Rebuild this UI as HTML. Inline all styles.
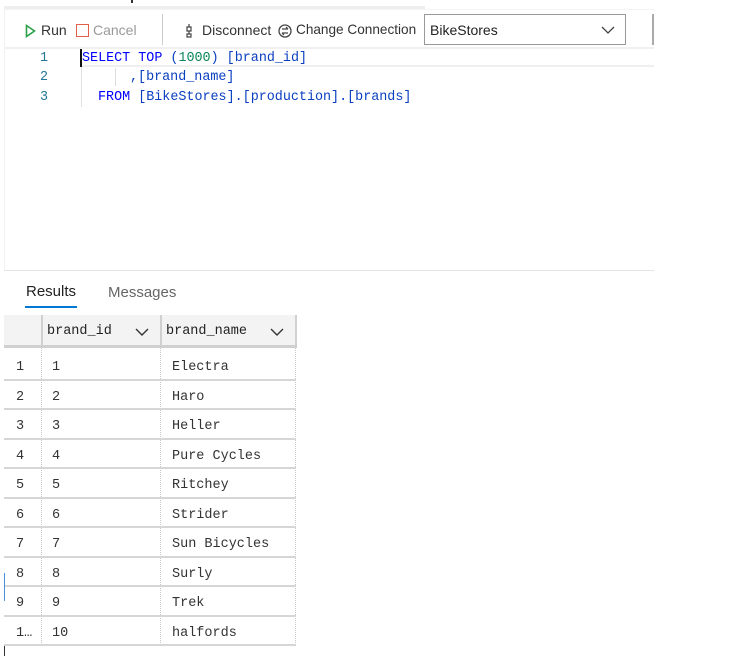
<!DOCTYPE html>
<html><head><meta charset="utf-8"><style>
*{margin:0;padding:0;box-sizing:border-box}
body{width:750px;height:656px;background:#fff;position:relative;overflow:hidden;font-family:"Segoe UI","Liberation Sans",sans-serif;}
.a{position:absolute;white-space:pre}
.mono{font-family:"Liberation Mono","DejaVu Sans Mono",monospace;font-size:13.4px}
.ui{font-size:14px;color:#333}
.kw{color:#0000ff}.num{color:#098658}.id{color:#0a3fc0}
.row{position:absolute;left:4px;width:292px;height:29.5px;border-bottom:2px solid #d6d6d6}
.cell{position:absolute;top:9px;font-family:"Liberation Mono","DejaVu Sans Mono",monospace;font-size:13.5px;color:#333}
</style></head><body>
<div class="a" style="left:4px;top:6px;width:421px;height:3px;background:#eeeeee"></div>
<div class="a" style="left:131px;top:0;width:2px;height:3px;background:#333"></div>
<div class="a" style="left:4px;top:9px;width:650px;height:1px;background:#f4f4f4"></div>
<!-- toolbar -->
<svg class="a" style="left:25px;top:24px" width="11" height="14"><path d="M1.5 1.5 L9.5 7 L1.5 12.5 Z" fill="none" stroke="#2ca049" stroke-width="1.6"/></svg>
<div class="a ui" style="left:41px;top:22px">Run</div>
<div class="a" style="left:76px;top:24px;width:13px;height:13px;border:1.5px solid #e0604a"></div>
<div class="a ui" style="left:93px;top:22px;color:#999">Cancel</div>
<div class="a" style="left:162px;top:14px;width:1px;height:31px;background:#ccc"></div>
<svg class="a" style="left:184px;top:23px" width="10" height="16"><path d="M5 1v3M3 4h4v4H3zM5 8v3M3 11h4v3H3z" fill="none" stroke="#444" stroke-width="1.2"/></svg>
<div class="a ui" style="left:202px;top:22px">Disconnect</div>
<svg class="a" style="left:277px;top:23px" width="16" height="16"><circle cx="8" cy="8" r="6" fill="none" stroke="#444" stroke-width="1.3"/><path d="M5 6h6M11 6l-2-2M11 10H5M5 10l2 2" stroke="#444" stroke-width="1.2" fill="none"/></svg>
<div class="a ui" style="left:296px;top:22px;font-size:13.6px">Change Connection</div>
<div class="a" style="left:424px;top:14px;width:202px;height:31px;border:1.5px solid #999"></div>
<div class="a ui" style="left:430px;top:22px;color:#222">BikeStores</div>
<svg class="a" style="left:601px;top:26px" width="14" height="9"><path d="M1 1l6 6 6-6" fill="none" stroke="#444" stroke-width="1.3"/></svg>
<div class="a" style="left:652px;top:14px;width:1.5px;height:31px;background:#aaa"></div>
<!-- editor -->
<div class="a" style="left:4px;top:47px;width:650px;height:2px;background:#f0f0f0"></div>
<div class="a" style="left:82px;top:65px;width:572px;height:2px;background:#efefef"></div>
<div class="a" style="left:80px;top:49px;width:2px;height:18px;background:#111"></div>
<div class="a" style="left:81px;top:67px;width:1px;height:40px;background:#e0e0e0"></div>
<div class="a" style="left:115px;top:68px;width:1px;height:18px;background:#ddd"></div>
<div class="a mono" style="left:40px;top:51px;color:#237893">1</div>
<div class="a mono" style="left:40px;top:70px;color:#237893">2</div>
<div class="a mono" style="left:40px;top:90px;color:#237893">3</div>
<div class="a mono" style="left:82px;top:51px"><span class="kw">SELECT TOP</span> <span class="id">(</span><span class="num">1000</span><span class="id">) [brand_id]</span></div>
<div class="a mono id" style="left:130px;top:70px">,[brand_name]</div>
<div class="a mono" style="left:98px;top:90px"><span class="kw">FROM</span> <span class="id">[BikeStores].[production].[brands]</span></div>
<!-- results -->
<div class="a" style="left:4px;top:9px;width:1px;height:262px;background:#f2f2f2"></div>
<div class="a" style="left:4px;top:270px;width:650px;height:1px;background:#e4e4e4"></div>
<div class="a" style="left:26px;top:283px;font-size:15px;color:#222">Results</div>
<div class="a" style="left:25px;top:306px;width:52px;height:2px;background:#0078d4"></div>
<div class="a" style="left:108px;top:284px;font-size:15px;color:#666">Messages</div>
<div class="a" style="left:4px;top:315px;width:292px;height:33px;background:#f3f3f3;border-bottom:3px solid #d0d0d0"></div>
<div class="a" style="left:41px;top:315px;width:1.5px;height:33px;background:#d0d0d0"></div>
<div class="a" style="left:160px;top:315px;width:1.5px;height:33px;background:#d0d0d0"></div>
<div class="a" style="left:295px;top:315px;width:1.5px;height:33px;background:#d0d0d0"></div>
<div class="a mono" style="left:47px;top:324px;color:#222;font-size:13.5px">brand_id</div>
<svg class="a" style="left:135px;top:328px" width="14" height="9"><path d="M1 1l6 6 6-6" fill="none" stroke="#333" stroke-width="1.4"/></svg>
<div class="a mono" style="left:166px;top:324px;color:#222;font-size:13.5px">brand_name</div>
<svg class="a" style="left:270px;top:328px" width="14" height="9"><path d="M1 1l6 6 6-6" fill="none" stroke="#333" stroke-width="1.4"/></svg>
<div class="a" style="left:41px;top:348px;width:0;height:297px;border-left:1px dotted #c8c8c8"></div>
<div class="a" style="left:160px;top:348px;width:0;height:297px;border-left:1px dotted #c8c8c8"></div>
<div class="a" style="left:295px;top:348px;width:0;height:297px;border-left:1px dotted #c8c8c8"></div>
<div class="row" style="top:351px"><span class="cell" style="left:12px">1</span><span class="cell" style="left:48px">1</span><span class="cell" style="left:168px">Electra</span></div>
<div class="row" style="top:380.5px"><span class="cell" style="left:12px">2</span><span class="cell" style="left:48px">2</span><span class="cell" style="left:168px">Haro</span></div>
<div class="row" style="top:410px"><span class="cell" style="left:12px">3</span><span class="cell" style="left:48px">3</span><span class="cell" style="left:168px">Heller</span></div>
<div class="row" style="top:439.5px"><span class="cell" style="left:12px">4</span><span class="cell" style="left:48px">4</span><span class="cell" style="left:168px">Pure Cycles</span></div>
<div class="row" style="top:469px"><span class="cell" style="left:12px">5</span><span class="cell" style="left:48px">5</span><span class="cell" style="left:168px">Ritchey</span></div>
<div class="row" style="top:498.5px"><span class="cell" style="left:12px">6</span><span class="cell" style="left:48px">6</span><span class="cell" style="left:168px">Strider</span></div>
<div class="row" style="top:528px"><span class="cell" style="left:12px">7</span><span class="cell" style="left:48px">7</span><span class="cell" style="left:168px">Sun Bicycles</span></div>
<div class="row" style="top:557.5px"><span class="cell" style="left:12px">8</span><span class="cell" style="left:48px">8</span><span class="cell" style="left:168px">Surly</span></div>
<div class="row" style="top:587px"><span class="cell" style="left:12px">9</span><span class="cell" style="left:48px">9</span><span class="cell" style="left:168px">Trek</span></div>
<div class="row" style="top:616.5px"><span class="cell" style="left:12px">1…</span><span class="cell" style="left:48px">10</span><span class="cell" style="left:168px">halfords</span></div>
<div class="a" style="left:4px;top:573px;width:1px;height:28px;background:#4a90d9"></div>
<div class="a" style="left:4px;top:646px;width:1px;height:10px;background:#333"></div>
</body></html>
